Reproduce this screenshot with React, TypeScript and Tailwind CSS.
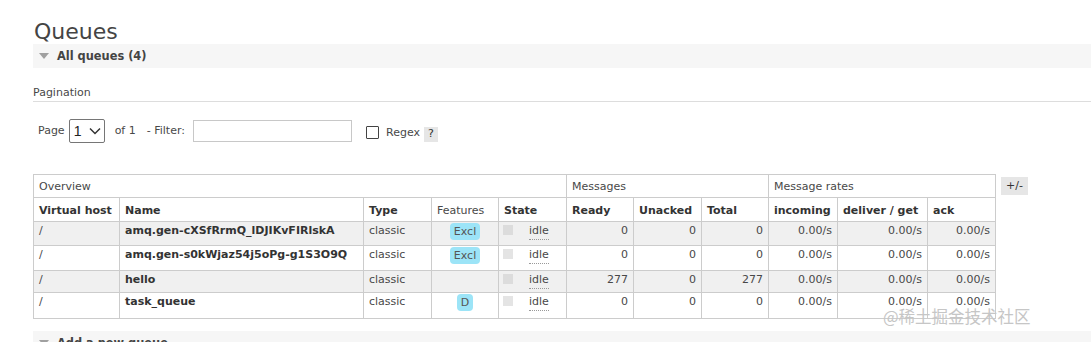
import React from "react";

const cols =
  "grid grid-cols-[86px_244px_68px_67px_68px_67px_68px_67px_69px_90px_68px]";

const cell = "border-r border-b border-[#ccc] px-[5px] leading-[14px]";

type Row = {
  name: string;
  feature?: string;
  ready: number;
  unacked: number;
  total: number;
  height: string;
  shade: boolean;
};

const rows: Row[] = [
  { name: "amq.gen-cXSfRrmQ_lDJIKvFIRlskA", feature: "Excl", ready: 0, unacked: 0, total: 0, height: "h-[24px]", shade: true },
  { name: "amq.gen-s0kWjaz54j5oPg-g1S3O9Q", feature: "Excl", ready: 0, unacked: 0, total: 0, height: "h-[25px]", shade: false },
  { name: "hello", ready: 277, unacked: 0, total: 277, height: "h-[22px]", shade: true },
  { name: "task_queue", feature: "D", ready: 0, unacked: 0, total: 0, height: "h-[26px]", shade: false },
];

function Triangle() {
  return (
    <svg width="10" height="6" viewBox="0 0 10 6" className="shrink-0">
      <polygon points="0,0 10,0 5,6" fill="#a0a0a0" />
    </svg>
  );
}

function SectionBar({ title, className }: { title: string; className?: string }) {
  return (
    <div className={"flex h-[24px] items-center bg-[#f6f6f6] pl-[6px] " + (className ?? "")}>
      <Triangle />
      <span className="ml-[8px] mt-[2px] text-[11.4px] font-bold text-[#444]">{title}</span>
    </div>
  );
}

function QueueRow({ row }: { row: Row }) {
  const bg = row.shade ? "bg-[#f0f0f0]" : "bg-white";
  return (
    <div className={cols + " " + row.height + " " + bg}>
      <div className={cell + " pt-[2px]"}>/</div>
      <div className={cell + " pt-[2px] font-bold text-[#333]"}>{row.name}</div>
      <div className={cell + " pt-[2px]"}>classic</div>
      <div className={cell + " flex justify-center pt-[1px]"}>
        {row.feature && (
          <span className="h-[17px] rounded-[4px] bg-[#9ce4f7] px-[4px] leading-[18px] text-[#555]">
            {row.feature}
          </span>
        )}
      </div>
      <div className={cell + " flex pt-[2px] pl-[4px]"}>
        <span className={"mt-[1px] h-[10px] w-[10px] " + (row.shade ? "bg-[#dcdcdc]" : "bg-[#e4e4e4]")} />
        <span className="ml-[16px] h-[16px] border-b border-dotted border-[#999]">idle</span>
      </div>
      <div className={cell + " pt-[2px] text-right"}>{row.ready}</div>
      <div className={cell + " pt-[2px] text-right"}>{row.unacked}</div>
      <div className={cell + " pt-[2px] text-right"}>{row.total}</div>
      <div className={cell + " pt-[2px] text-right"}>0.00/s</div>
      <div className={cell + " pt-[2px] text-right"}>0.00/s</div>
      <div className={cell + " pt-[2px] text-right"}>0.00/s</div>
    </div>
  );
}

export default function App() {
  return (
    <div className="relative h-[342px] w-[1091px] overflow-hidden bg-white font-['DejaVu_Sans',sans-serif] text-[11px] text-[#484848]">
      <div className="pl-[33px]">
        <h1 className="pt-[20px] pl-[1px] text-[22px] leading-[24px] text-[#444]">Queues</h1>
        <SectionBar title="All queues (4)" />

        <div className="mt-[18px] border-b border-[#ddd] pb-[1px] leading-[14px]">Pagination</div>

        <div className="mt-[17px] flex h-[24px] items-center pl-[5px]">
          <span>Page</span>
          <div className="ml-[4px] flex h-[24px] w-[36px] items-center rounded-[2px] border border-[#767676] pl-[4px]">
            <span className="font-['Liberation_Sans',sans-serif] text-[14px] text-[#222]">1</span>
            <svg width="12" height="8" viewBox="0 0 12 8" className="ml-[8px]">
              <path d="M1 1.5 L6 6.5 L11 1.5" fill="none" stroke="#333" strokeWidth="1.5" />
            </svg>
          </div>
          <span className="ml-[10px]">of 1</span>
          <span className="ml-[11px]">- Filter:</span>
          <div className="ml-[8px] h-[22px] w-[159px] border border-[#c8c8c8] bg-white" />
          <span className="ml-[14px] mt-[2px] h-[13px] w-[13px] rounded-[1px] border border-[#444] bg-white" />
          <span className="ml-[7px] mt-[5px]">Regex</span>
          <span className="ml-[4px] mt-[7px] flex h-[15px] w-[14px] items-center justify-center bg-[#e6e6e6] text-[#333]">
            ?
          </span>
        </div>

        <div className="mt-[31px] flex items-start">
          <div className="w-[963px] border-l border-t border-[#ccc]">
            <div className={cols + " h-[23px]"}>
              <div className={cell + " col-span-5 pt-[5px]"}>Overview</div>
              <div className={cell + " col-span-3 pt-[5px]"}>Messages</div>
              <div className={cell + " col-span-3 pt-[5px]"}>Message rates</div>
            </div>
            <div className={cols + " h-[24px] font-bold text-[#333]"}>
              <div className={cell + " pt-[6px]"}>Virtual host</div>
              <div className={cell + " pt-[6px]"}>Name</div>
              <div className={cell + " pt-[6px]"}>Type</div>
              <div className={cell + " pt-[6px] font-normal text-[#484848]"}>Features</div>
              <div className={cell + " pt-[6px]"}>State</div>
              <div className={cell + " pt-[6px]"}>Ready</div>
              <div className={cell + " pt-[6px]"}>Unacked</div>
              <div className={cell + " pt-[6px]"}>Total</div>
              <div className={cell + " pt-[6px]"}>incoming</div>
              <div className={cell + " pt-[6px]"}>deliver / get</div>
              <div className={cell + " pt-[6px]"}>ack</div>
            </div>
            {rows.map((r) => (
              <QueueRow key={r.name} row={r} />
            ))}
          </div>
          <span className="ml-[5px] mt-[3px] flex h-[18px] w-[27px] items-center justify-center bg-[#e6e6e6] text-[#333]">
            +/-
          </span>
        </div>

        <SectionBar title="Add a new queue" className="mt-[12px]" />
      </div>

      <div className="absolute left-[883px] top-[304px] font-['Noto_Sans_CJK_SC',sans-serif] text-[16.5px] leading-[24px] text-[#c6c6c6]">
        @稀土掘金技术社区
      </div>
    </div>
  );
}
